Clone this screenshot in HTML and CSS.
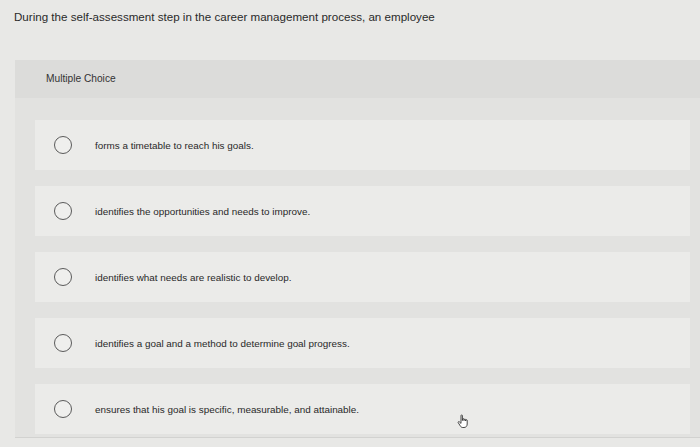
FILE: index.html
```html
<!DOCTYPE html>
<html>
<head>
<meta charset="utf-8">
<link rel="stylesheet" href="styles.css">
</head>
<body>
<div class="page">
  <p class="title">During the self-assessment step in the career management process, an employee</p>
  <div class="panel">
    <div class="panel-head">Multiple Choice</div>
    <div class="panel-body">
      <div class="option"><span class="radio"></span><span class="label">forms a timetable to reach his goals.</span></div>
      <div class="option"><span class="radio"></span><span class="label">identifies the opportunities and needs to improve.</span></div>
      <div class="option"><span class="radio"></span><span class="label">identifies what needs are realistic to develop.</span></div>
      <div class="option"><span class="radio"></span><span class="label">identifies a goal and a method to determine goal progress.</span></div>
      <div class="option"><span class="radio"></span><span class="label">ensures that his goal is specific, measurable, and attainable.</span></div>
    </div>
  </div>
  <svg class="cursor" width="14" height="15" viewBox="0 0 14 15">
    <path d="M4 1.5 C4 0.8 5.4 0.8 5.4 1.5 L5.4 6.5 L5.6 5.2 C5.6 4.5 7 4.5 7 5.2 L7 6.6 L7.2 5.6 C7.2 5 8.6 5 8.6 5.6 L8.6 7 L8.8 6.2 C8.8 5.6 10.2 5.6 10.2 6.2 L10.2 10 C10.2 12 9 13.5 7 13.5 L5.8 13.5 C4.6 13.5 3.8 12.8 3.2 11.8 L1.2 8.6 C0.8 8 1.6 7.2 2.3 7.8 L4 9.4 Z" fill="#fff" stroke="#333" stroke-width="0.9" stroke-linejoin="round"/>
  </svg>
</div>
</body>
</html>
```

FILE: styles.css
```css
html, body {
  margin: 0;
  padding: 0;
  background: #e8e8e6;
}

.page {
  position: relative;
  width: 700px;
  height: 447px;
  overflow: hidden;
  font-family: "Liberation Sans", Arial, sans-serif;
  color: #2f2f2f;
}

.title {
  margin: 0;
  padding: 10px 0 0 14px;
  font-size: 11.6px;
  line-height: 14px;
  color: #2a2a2a;
}

.panel {
  margin: 36px 0 0 15px;
}

.panel-head {
  height: 38px;
  line-height: 38px;
  padding-left: 31px;
  font-size: 10.2px;
  color: #333;
  background: #dcdcda;
}

.panel-body {
  display: flex;
  flex-direction: column;
  gap: 16px;
  padding: 22px 10px 3px 20px;
  background: #e2e2e0;
  border-bottom: 1px solid #d2d2d0;
}

.option {
  display: flex;
  align-items: center;
  gap: 23px;
  height: 50px;
  padding-left: 19px;
  background: #ebebe9;
}

.radio {
  width: 18px;
  height: 18px;
  flex: none;
  border: 1.2px solid #5a5a5a;
  border-radius: 50%;
  box-sizing: border-box;
  background: #efefed;
}

.label {
  font-size: 9.9px;
  color: #282828;
}

.cursor {
  position: absolute;
  left: 457px;
  top: 414px;
}
```
